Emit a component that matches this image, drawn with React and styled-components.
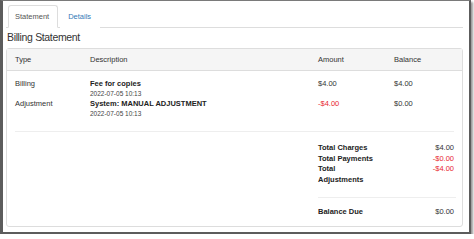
import styled, { createGlobalStyle } from 'styled-components';

const Global = createGlobalStyle`
  body {
    margin: 0;
    background: #ffffff;
    font-family: "Liberation Sans", Arial, sans-serif;
    color: #333;
  }
`;

const rows = [
  { type: 'Billing', desc: 'Fee for copies', date: '2022-07-05 10:13', amount: '$4.00', balance: '$4.00', neg: false },
  { type: 'Adjustment', desc: 'System: MANUAL ADJUSTMENT', date: '2022-07-05 10:13', amount: '-$4.00', balance: '$0.00', neg: true },
];

const totals = [
  { label: 'Total Charges', value: '$4.00', neg: false },
  { label: 'Total Payments', value: '-$0.00', neg: true },
  { label: 'Total Adjustments', value: '-$4.00', neg: true },
];

const App = () => {
  return (
    <>
      <Global />
      <Frame>
        <Tabs>
          <Tab active>Statement</Tab>
          <Tab>Details</Tab>
        </Tabs>
        <Heading>Billing Statement</Heading>
        <Panel>
          <HeaderRow>
            <span>Type</span>
            <span>Description</span>
            <span>Amount</span>
            <span>Balance</span>
          </HeaderRow>
          <Body>
            {rows.map((r) => (
              <Row key={r.type}>
                <span>{r.type}</span>
                <Desc>
                  <strong>{r.desc}</strong>
                  <small>{r.date}</small>
                </Desc>
                <Money neg={r.neg}>{r.amount}</Money>
                <Money>{r.balance}</Money>
              </Row>
            ))}
            <Divider />
            <Totals>
              {totals.map((t) => (
                <TotalLine key={t.label}>
                  <Label>{t.label}</Label>
                  <Value neg={t.neg}>{t.value}</Value>
                </TotalLine>
              ))}
              <TotalDivider />
              <TotalLine>
                <Label>Balance Due</Label>
                <Value>$0.00</Value>
              </TotalLine>
            </Totals>
          </Body>
        </Panel>
      </Frame>
    </>
  );
};

export default App;

const Frame = styled.div`
  box-sizing: border-box;
  width: 471px;
  height: 234px;
  border: 2px solid #5c5c5c;
  border-top: 1px solid #7a7a7a;
  border-left-width: 3px;
  box-shadow: 2px 2px 2px #9a9a9a;
  padding: 4px 6px 0 3px;
  background: #fff;
`;

const Tabs = styled.div`
  display: flex;
  border-bottom: 1px solid #ddd;
  height: 22px;
  padding-left: 2px;
`;

const Tab = styled.div`
  box-sizing: border-box;
  height: 23px;
  padding: 0 8px 0 ${(p) => (p.active ? '6px' : '7px')};
  margin-right: 2px;
  display: flex;
  align-items: center;
  font-size: 7.5px;
  color: ${(p) => (p.active ? '#555' : '#337ab7')};
  background: #fff;
  border: 1px solid ${(p) => (p.active ? '#ddd' : 'transparent')};
  border-bottom-color: ${(p) => (p.active ? '#fff' : 'transparent')};
  border-radius: 3px 3px 0 0;
`;

const Heading = styled.h2`
  margin: 3px 0 0 1px;
  font-size: 10.5px;
  letter-spacing: -0.35px;
  font-weight: normal;
  line-height: 12px;
  color: #333;
`;

const Panel = styled.div`
  margin-top: 5px;
  height: 179px;
  border: 1px solid #ddd;
  border-radius: 3px;
  box-sizing: border-box;
`;

const HeaderRow = styled.div`
  display: grid;
  grid-template-columns: 75px 228px 76px 1fr;
  padding: 0 8px;
  height: 21px;
  align-items: center;
  background: #f5f5f5;
  border-bottom: 1px solid #ddd;
  font-size: 7.5px;
  color: #333;
`;

const Body = styled.div`
  padding: 8px 8px 0 8px;
`;

const Row = styled.div`
  display: grid;
  grid-template-columns: 75px 228px 76px 1fr;
  font-size: 7.5px;
  line-height: 10px;
`;

const Desc = styled.div`
  display: flex;
  flex-direction: column;
  strong {
    font-weight: bold;
    color: #222;
  }
  small {
    font-size: 6.5px;
    line-height: 10px;
    color: #444;
  }
`;

const Money = styled.span`
  color: ${(p) => (p.neg ? '#e8262e' : '#333')};
`;

const Divider = styled.div`
  border-top: 1px solid #eee;
  margin: 12px 0 0 0;
`;

const Totals = styled.div`
  margin: 11px 0 0 303px;
  font-size: 7.5px;
`;

const TotalLine = styled.div`
  display: flex;
  justify-content: space-between;
  align-items: flex-start;
  line-height: 10.5px;
`;

const Label = styled.span`
  font-weight: bold;
  color: #222;
  width: 62px;
`;

const Value = styled.span`
  color: ${(p) => (p.neg ? '#e8262e' : '#333')};
`;

const TotalDivider = styled.div`
  border-top: 1px solid #eee;
  margin: 12px -2px 9px 0;
`;
